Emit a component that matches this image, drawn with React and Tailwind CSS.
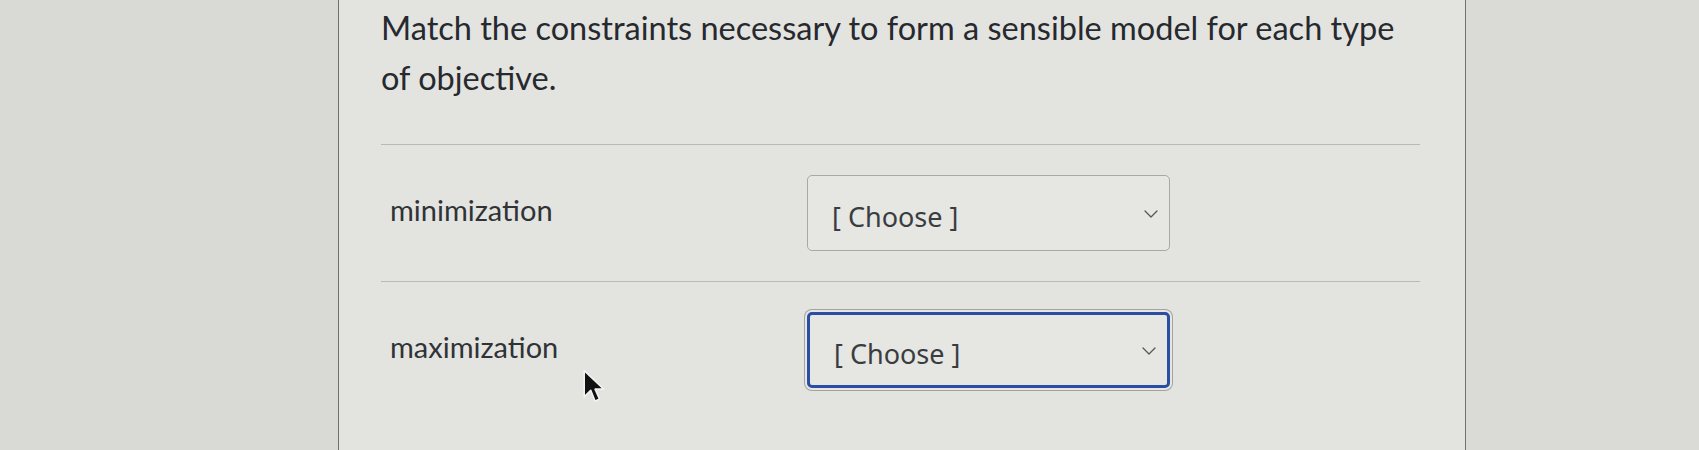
import React from "react";
import { ChevronDown } from "lucide-react";

function Cursor() {
  return (
    <svg className="absolute left-[582px] top-[368px]" width="24" height="38" viewBox="0 0 22 34">
      <path d="M2 2 L2 26 L8 20 L12 30 L16 28 L12 19 L20 19 Z" fill="#111" stroke="#f2f2f2" strokeWidth="1.5" strokeLinejoin="round" />
    </svg>
  );
}

function ChooseSelect({ focused }) {
  const base = "w-[363px] h-[76px] rounded-[5px] flex items-center justify-between pl-[24px] pr-[6px] bg-[#e6e6e3]";
  const look = focused
    ? "border-[3px] border-[#2b4ea4] shadow-[0_0_0_2px_#e6e6e3,0_0_0_3px_#a3a3a0]"
    : "border border-[#a8a8a5]";
  return (
    <div className={`${base} ${look}`}>
      <span className="pt-[8px] text-[27px] text-[#3a3d40] font-['Noto_Sans',sans-serif]">[ Choose ]</span>
      <ChevronDown size={24} strokeWidth={1.3} className="text-[#55585b] mt-[2px]" />
    </div>
  );
}

function MatchRow({ label, focused }) {
  return (
    <div className="flex items-center h-[136px]">
      <div className="w-[426px] pl-[9px] -mt-[6px] text-[29px] text-[#2f3336]">{label}</div>
      <ChooseSelect focused={focused} />
    </div>
  );
}

export default function App() {
  return (
    <div className="relative h-[450px] w-full bg-[#d9dad6] flex overflow-hidden font-['Lato',sans-serif]">
      <div className="w-[338px] shrink-0" />
      <div className="w-[1128px] shrink-0 border-x border-[#6f716f] bg-[#e3e3e0] pl-[42px] pr-[45px] pt-[3px]">
        <p className="text-[32.5px] leading-[50px] text-[#26292d]">
          Match the constraints necessary to form a sensible model for each type of objective.
        </p>
        <div className="mt-[41px] border-t border-[#b9bab7]" />
        <MatchRow label="minimization" />
        <div className="border-t border-[#b9bab7]" />
        <MatchRow label="maximization" focused />
      </div>
      <div className="flex-1 bg-[#dadbd7]" />
      <Cursor />
    </div>
  );
}
